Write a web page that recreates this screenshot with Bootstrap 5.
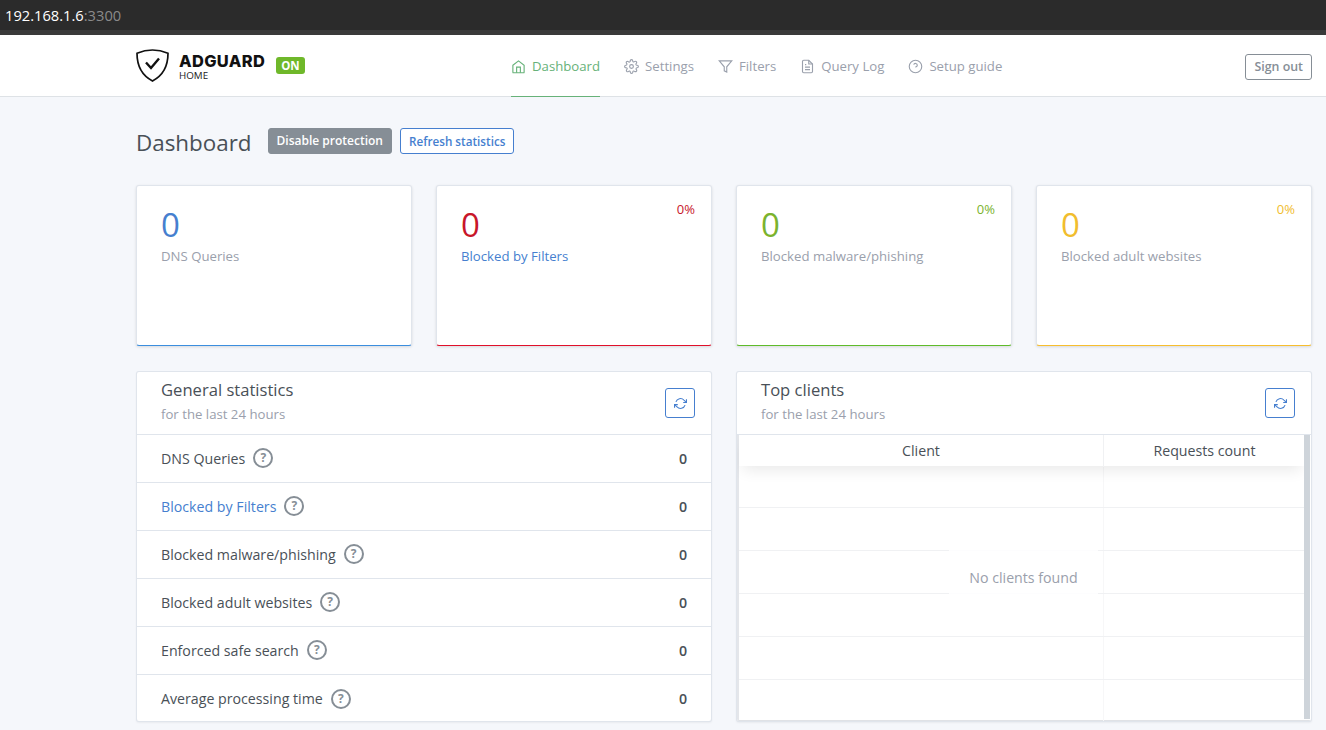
<!DOCTYPE html>
<html lang="en">
<head>
    <meta charset="UTF-8">
    <meta name="viewport" content="width=device-width, initial-scale=1.0">
    <title>AdGuard Home</title>
    <link href="https://cdn.jsdelivr.net/npm/bootstrap@5.3.2/dist/css/bootstrap.min.css" rel="stylesheet">
    <style>
        html, body { height: 730px; overflow: hidden; }
        body {
            background: #f5f7fb;
            font-family: "Open Sans", "Noto Sans", sans-serif;
            font-size: 14.2px;
            color: #495057;
        }

        /* fake browser address bar */
        .addr-bar {
            height: 35px;
            background: #2b2b2b;
            border-bottom: 5px solid #3a3a3a;
            padding-left: 5px;
            font-size: 14.7px;
            line-height: 31px;
            color: #8a8a8a;
        }
        .addr-bar b { font-weight: 400; color: #fff; }

        .top-head {
            height: 62px;
            background: #fff;
            border-bottom: 1px solid #dee2e6;
            padding: 0 14px 0 136px;
        }
        .brand-text { margin-left: 10px; }
        .brand-name { font-size: 16.4px; font-weight: 800; color: #111; line-height: 16px; letter-spacing: .35px; font-family: "Inter", sans-serif; margin-top: 2px; }
        .brand-sub { font-size: 9.8px; color: #222; line-height: 10px; margin-top: 2px; }
        .on-pill {
            background: #6fb82a;
            color: #fff;
            font-size: 11.5px;
            font-weight: 700;
            border-radius: 3px;
            padding: 0 5px;
            line-height: 17px;
            margin-left: 11px;
        }
        .head-nav { position: absolute; left: 511px; top: 35px; height: 62px; gap: 24px; }
        .head-nav a {
            color: #9aa0ac;
            font-size: 13.2px;
            text-decoration: none;
            height: 62px;
            padding-top: 2px;
            display: flex;
            align-items: center;
            gap: 6px;
            border-bottom: 1px solid transparent;
        }
        .head-nav a.on { color: #67b279; border-bottom-color: #67b279; }
        .sign-btn {
            border: 1px solid #868e96;
            color: #868e96;
            font-size: 12.4px;
            font-weight: 600;
            border-radius: 3px;
            padding: 0 8px;
            line-height: 24px;
            background: #fff;
            margin-top: 2px;
        }

        .page-body { padding: 31px 14px 0 136px; }
        .page-name { font-size: 22.4px; font-weight: 400; line-height: 30px; margin: 0; color: #495057; }
        .act-btn {
            font-size: 11.7px;
            font-weight: 600;
            border-radius: 3px;
            padding: 0 8px;
            line-height: 24px;
            border: 1px solid #467fcf;
            color: #467fcf;
            background: #fff;
        }
        .act-btn.grey { font-size: 12px; background: #868e96; border-color: #868e96; color: #fff; }

        .pane {
            background: #fff;
            border: 1px solid rgba(0, 40, 100, .12);
            border-radius: 3px;
            box-shadow: 0 1px 2px rgba(0, 0, 0, .05);
        }
        .stat-grid { display: grid; grid-template-columns: repeat(4, 276px); gap: 24px; margin-top: 27px; }
        .stat-box { height: 161px; padding: 19px 24px; position: relative; border-bottom: 1px solid #495057; box-shadow: 0 1px 3px rgba(0, 0, 0, .12); }
        .stat-num { font-size: 33px; line-height: 40px; }
        .stat-lbl { font-size: 13.2px; color: #9aa0ac; line-height: 20px; margin-top: 1px; }
        .stat-pct { position: absolute; right: 16px; top: 14px; font-size: 13px; line-height: 18px; }
        .c-blue { color: #467fcf; }
        .c-red { color: #c8162a; }
        .c-green { color: #7bb32e; }
        .c-yellow { color: #f1bd2e; }
        .line-blue { border-bottom-color: #3b8ede; }
        .line-red { border-bottom-color: #e0102a; }
        .line-green { border-bottom-color: #5fbb2a; }
        .line-yellow { border-bottom-color: #f7be2e; }

        .lower-grid { display: grid; grid-template-columns: repeat(2, 576px); gap: 24px; margin-top: 25px; }
        .lower-pane { height: 351px; overflow: hidden; position: relative; }
        .pane-head { height: 63px; padding: 6px 16px 0 24px; border-bottom: 1px solid rgba(0, 40, 100, .12); }
        .pane-title { font-size: 16.6px; line-height: 24px; color: #495057; }
        .pane-sub { font-size: 13.2px; line-height: 20px; color: #9aa0ac; margin-top: 2px; }
        .refresh-btn {
            width: 30px;
            height: 30px;
            border: 1px solid #467fcf;
            border-radius: 3px;
            background: #fff;
            padding: 0;
            margin-top: 10px;
            display: flex;
            align-items: center;
            justify-content: center;
        }
        .stat-row {
            height: 48px;
            padding: 0 24px;
            border-bottom: 1px solid rgba(0, 40, 100, .12);
        }
        .stat-row:last-child { border-bottom: 0; }
        .stat-row strong { font-weight: 600; color: #495057; }
        .hint {
            width: 20px;
            height: 20px;
            border: 2px solid #868e96;
            border-radius: 50%;
            color: #868e96;
            font-size: 12px;
            font-weight: 700;
            line-height: 16px;
            text-align: center;
            margin-left: 8px;
        }

        .clients-wrap { height: 287px; position: relative; border-left: 2px solid #e4e6ea; border-bottom: 2px solid #e0e2e6; padding-right: 6px; }
        .clients-bar { position: absolute; right: 1px; top: 0; bottom: 1px; width: 6px; background: #ced4da; }
        .cl-line { display: grid; grid-template-columns: 364px 1fr; }
        .cl-line-head { height: 31px; position: relative; box-shadow: 0 8px 15px -4px rgba(0, 0, 0, .09); background: #fff; }
        .cl-line-head div { line-height: 32px; text-align: center; color: #495057; }
        .cl-line-head div + div { border-left: 1px solid #f0f1f3; }
        .cl-line-row { height: 43px; border-bottom: 1px solid #f0f1f3; }
        .cl-line-row.first { height: 42px; }
        .cl-line-row.last { border-bottom: 0; }
        .cl-line-row div + div { border-left: 1px solid #f7f7f8; }
        .no-rows {
            position: absolute;
            left: 210px;
            top: 113px;
            width: 149px;
            height: 50px;
            padding-top: 20px;
            background: rgba(255, 255, 255, .85);
            color: #9aa0ac;
            text-align: center;
            line-height: 20px;
        }
    </style>
</head>
<body>

<div class="addr-bar"><b>192.168.1.6</b>:3300</div>

<header class="top-head d-flex align-items-center justify-content-between">
    <div class="d-flex align-items-center">
        <svg width="33" height="33" viewBox="0 0 33 33" fill="none" class="logo-mark">
            <path d="M16.5 1C11 1 5.5 2.4 1 4.3C1 17 5 26 16.5 32C28 26 32 17 32 4.3C27.5 2.4 22 1 16.5 1Z" stroke="#111" stroke-width="1.7"/>
            <path d="M10 13.5L15 19L23 9.5" stroke="#111" stroke-width="2.4"/>
        </svg>
        <div class="brand-text">
            <div class="brand-name">ADGUARD</div>
            <div class="brand-sub">HOME</div>
        </div>
        <span class="on-pill">ON</span>
    </div>
    <nav class="head-nav d-flex">
        <a class="on" href="#">
            <svg width="15" height="15" viewBox="0 0 24 24" fill="none" stroke="currentColor" stroke-width="1.8"><path d="M3 10l9-7 9 7v11a1 1 0 0 1-1 1H4a1 1 0 0 1-1-1z"/><path d="M9 22v-9h6v9"/></svg>
            Dashboard
        </a>
        <a href="#">
            <svg width="15" height="15" viewBox="0 0 24 24" fill="none" stroke="currentColor" stroke-width="1.8"><circle cx="12" cy="12" r="3"/><path d="M19.4 15a1.65 1.65 0 0 0 .33 1.82l.06.06a2 2 0 1 1-2.83 2.83l-.06-.06a1.65 1.65 0 0 0-2.82 1.17V21a2 2 0 1 1-4 0v-.09a1.65 1.65 0 0 0-2.82-1.12l-.06.06a2 2 0 1 1-2.83-2.83l.06-.06A1.65 1.65 0 0 0 3.09 14H3a2 2 0 1 1 0-4h.09a1.65 1.65 0 0 0 1.12-2.82l-.06-.06a2 2 0 1 1 2.83-2.83l.06.06A1.65 1.65 0 0 0 10 3.09V3a2 2 0 1 1 4 0v.09a1.65 1.65 0 0 0 2.82 1.12l.06-.06a2 2 0 1 1 2.83 2.83l-.06.06A1.65 1.65 0 0 0 20.91 10H21a2 2 0 1 1 0 4h-.09a1.65 1.65 0 0 0-1.51 1z"/></svg>
            Settings
        </a>
        <a href="#">
            <svg width="15" height="15" viewBox="0 0 24 24" fill="none" stroke="currentColor" stroke-width="1.8"><path d="M22 3H2l8 9.5V19l4 2v-8.5z"/></svg>
            Filters
        </a>
        <a href="#">
            <svg width="15" height="15" viewBox="0 0 24 24" fill="none" stroke="currentColor" stroke-width="1.8"><path d="M14 2H6a2 2 0 0 0-2 2v16a2 2 0 0 0 2 2h12a2 2 0 0 0 2-2V8z"/><path d="M14 2v6h6M8 13h8M8 17h8M8 9h2"/></svg>
            Query Log
        </a>
        <a href="#">
            <svg width="15" height="15" viewBox="0 0 24 24" fill="none" stroke="currentColor" stroke-width="1.8"><circle cx="12" cy="12" r="10"/><path d="M9.1 9a3 3 0 0 1 5.8 1c0 2-3 3-3 3M12 17h.01"/></svg>
            Setup guide
        </a>
    </nav>
    <button class="sign-btn" type="button">Sign out</button>
</header>

<main class="page-body">
    <div class="d-flex align-items-start">
        <h1 class="page-name me-3">Dashboard</h1>
        <button class="act-btn grey me-2" type="button">Disable protection</button>
        <button class="act-btn" type="button">Refresh statistics</button>
    </div>

    <div class="stat-grid">
        <div class="pane stat-box line-blue">
            <div class="stat-num c-blue">0</div>
            <div class="stat-lbl">DNS Queries</div>
        </div>
        <div class="pane stat-box line-red">
            <div class="stat-pct c-red">0%</div>
            <div class="stat-num c-red">0</div>
            <div class="stat-lbl c-blue">Blocked by Filters</div>
        </div>
        <div class="pane stat-box line-green">
            <div class="stat-pct c-green">0%</div>
            <div class="stat-num c-green">0</div>
            <div class="stat-lbl">Blocked malware/phishing</div>
        </div>
        <div class="pane stat-box line-yellow">
            <div class="stat-pct c-yellow">0%</div>
            <div class="stat-num c-yellow">0</div>
            <div class="stat-lbl">Blocked adult websites</div>
        </div>
    </div>

    <div class="lower-grid">
        <div class="pane lower-pane">
            <div class="pane-head d-flex justify-content-between">
                <div>
                    <div class="pane-title">General statistics</div>
                    <div class="pane-sub">for the last 24 hours</div>
                </div>
                <button class="refresh-btn" type="button">
                    <svg width="13" height="13" viewBox="0 0 24 24" fill="none" stroke="#467fcf" stroke-width="2"><path d="M23 4v6h-6M1 20v-6h6"/><path d="M3.5 9a9 9 0 0 1 14.9-3.4L23 10M1 14l4.6 4.4A9 9 0 0 0 20.5 15"/></svg>
                </button>
            </div>
            <div class="stat-row d-flex align-items-center justify-content-between"><div class="d-flex align-items-center">DNS Queries<span class="hint">?</span></div><strong>0</strong></div>
            <div class="stat-row d-flex align-items-center justify-content-between"><div class="d-flex align-items-center c-blue">Blocked by Filters<span class="hint">?</span></div><strong>0</strong></div>
            <div class="stat-row d-flex align-items-center justify-content-between"><div class="d-flex align-items-center">Blocked malware/phishing<span class="hint">?</span></div><strong>0</strong></div>
            <div class="stat-row d-flex align-items-center justify-content-between"><div class="d-flex align-items-center">Blocked adult websites<span class="hint">?</span></div><strong>0</strong></div>
            <div class="stat-row d-flex align-items-center justify-content-between"><div class="d-flex align-items-center">Enforced safe search<span class="hint">?</span></div><strong>0</strong></div>
            <div class="stat-row d-flex align-items-center justify-content-between"><div class="d-flex align-items-center">Average processing time<span class="hint">?</span></div><strong>0</strong></div>
        </div>

        <div class="pane lower-pane">
            <div class="pane-head d-flex justify-content-between">
                <div>
                    <div class="pane-title">Top clients</div>
                    <div class="pane-sub">for the last 24 hours</div>
                </div>
                <button class="refresh-btn" type="button">
                    <svg width="13" height="13" viewBox="0 0 24 24" fill="none" stroke="#467fcf" stroke-width="2"><path d="M23 4v6h-6M1 20v-6h6"/><path d="M3.5 9a9 9 0 0 1 14.9-3.4L23 10M1 14l4.6 4.4A9 9 0 0 0 20.5 15"/></svg>
                </button>
            </div>
            <div class="clients-wrap">
                <div class="cl-line cl-line-head"><div>Client</div><div>Requests count</div></div>
                <div class="cl-line cl-line-row first"><div></div><div></div></div>
                <div class="cl-line cl-line-row"><div></div><div></div></div>
                <div class="cl-line cl-line-row"><div></div><div></div></div>
                <div class="cl-line cl-line-row"><div></div><div></div></div>
                <div class="cl-line cl-line-row"><div></div><div></div></div>
                <div class="cl-line cl-line-row last"><div></div><div></div></div>
                <div class="no-rows">No clients found</div>
                <div class="clients-bar"></div>
            </div>
        </div>
    </div>
</main>

<script src="https://cdn.jsdelivr.net/npm/bootstrap@5.3.2/dist/js/bootstrap.bundle.min.js"></script>
</body>
</html>
